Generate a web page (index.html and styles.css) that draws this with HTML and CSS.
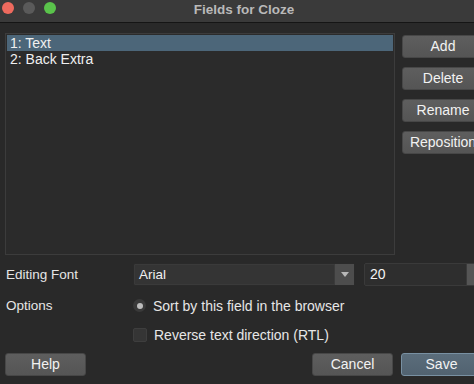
FILE: index.html
```html
<!DOCTYPE html>
<html>
<head>
<meta charset="utf-8">
<link rel="stylesheet" href="styles.css">
</head>
<body>
<div class="window">
  <div class="titlebar">
    <div class="lights">
      <span class="light red"></span>
      <span class="light grey"></span>
      <span class="light green"></span>
    </div>
    <div class="title">Fields for Cloze</div>
  </div>
  <div class="content">
    <div class="top">
      <div class="list">
        <div class="item selected">1: Text</div>
        <div class="item">2: Back Extra</div>
      </div>
      <div class="side">
        <div class="btn side-btn">Add</div>
        <div class="btn side-btn">Delete</div>
        <div class="btn side-btn">Rename</div>
        <div class="btn side-btn">Reposition</div>
      </div>
    </div>
    <div class="form">
      <div class="frow">
        <div class="label">Editing Font</div>
        <div class="fontrow">
          <div class="combo">
            <span class="combo-text">Arial</span>
            <span class="combo-arrow"><svg width="8" height="5" viewBox="0 0 8 5"><path d="M0 0 H8 L4 5 Z" fill="#b8b8b8"/></svg></span>
          </div>
          <div class="spin">
            <span class="spin-text">20</span>
            <span class="spin-btns"></span>
          </div>
        </div>
      </div>
      <div class="frow row-opt">
        <div class="label">Options</div>
        <div class="opt">
          <span class="radio"><span class="dot"></span></span>
          <span>Sort by this field in the browser</span>
        </div>
      </div>
      <div class="frow row-rtl">
        <div class="label"></div>
        <div class="opt">
          <span class="check"></span>
          <span>Reverse text direction (RTL)</span>
        </div>
      </div>
    </div>
    <div class="footer">
      <div class="btn foot-btn">Help</div>
      <div class="spacer"></div>
      <div class="btn foot-btn">Cancel</div>
      <div class="btn foot-btn default">Save</div>
    </div>
  </div>
</div>
</body>
</html>
```

FILE: styles.css
```css
html, body {
  margin: 0;
  padding: 0;
  background: #292929;
  overflow: hidden;
}
body {
  width: 474px;
  height: 384px;
  font-family: "Liberation Sans", Arial, sans-serif;
  font-size: 13px;
  color: #e6e6e6;
}
.window {
  width: 500px;
  height: 384px;
  background: #292929;
}
.titlebar {
  height: 22px;
  background: #3a3a3a;
  border-bottom: 1px solid #151515;
  position: relative;
  display: flex;
  align-items: center;
  justify-content: center;
  width: 474px;
}
.lights {
  position: absolute;
  left: 2px;
  top: 2px;
  display: flex;
  gap: 9px;
}
.light {
  width: 12px;
  height: 12px;
  border-radius: 50%;
  display: block;
}
.red { background: #ee6a5e; }
.grey { background: #5a5a5a; }
.green { background: #5ac34b; }
.title {
  font-weight: bold;
  font-size: 13.5px;
  color: #b9b9b9;
  margin-left: 14px;
  margin-top: -4px;
}
.content {
  padding: 10px 0 0 5px;
}
.top {
  display: flex;
  align-items: flex-start;
}
.list {
  width: 388px;
  height: 219px;
  border: 1px solid #3c3c3c;
  background: #2b2b2b;
  padding: 1px 0 0 0;
}
.item {
  height: 16px;
  line-height: 16px;
  padding-left: 3px;
  font-size: 14px;
  color: #f0f0f0;
  margin: 0 1px;
}
.item.selected {
  background: #4c6679;
}
.side {
  display: flex;
  flex-direction: column;
  gap: 9px;
  margin-left: 7px;
  margin-top: 2px;
}
.btn {
  box-sizing: border-box;
  height: 23px;
  line-height: 21px;
  text-align: center;
  background: linear-gradient(#5e5e5e, #555555);
  border: 1px solid #474747;
  border-radius: 3px;
  color: #f2f2f2;
  font-size: 14px;
}
.side-btn {
  width: 82px;
}
.form {
  display: flex;
  flex-direction: column;
  margin-top: 8px;
}
.frow {
  display: flex;
  height: 23px;
}
.row-opt { margin-top: 8px; }
.row-rtl { margin-top: 6px; }
.label {
  width: 128px;
  flex: none;
  padding-left: 1px;
  box-sizing: border-box;
  line-height: 23px;
  font-size: 13.5px;
}
.fontrow {
  display: flex;
  gap: 9px;
}
.combo {
  box-sizing: border-box;
  width: 222px;
  height: 23px;
  display: flex;
  background: #343434;
  border: 1px solid #2a2a2a;
  border-radius: 2px;
  box-shadow: 0 0 0 1px #3a3a3a inset;
}
.combo-text {
  flex: 1;
  padding-left: 5px;
  line-height: 21px;
  font-size: 13.5px;
  color: #f0f0f0;
}
.combo-arrow {
  width: 19px;
  background: #4d4d4d;
  display: flex;
  align-items: center;
  justify-content: center;
  border-left: 1px solid #3b3b3b;
}
.spin {
  box-sizing: border-box;
  width: 112px;
  height: 23px;
  display: flex;
  background: #2e2e2e;
  border: 1px solid #3a3a3a;
  border-radius: 2px;
}
.spin-text {
  flex: 1;
  padding-left: 5px;
  line-height: 21px;
  font-size: 14px;
  color: #f4f4f4;
}
.spin-btns {
  width: 8px;
  background: #555;
  border-left: 1px solid #3a3a3a;
}
.opt {
  display: flex;
  align-items: center;
  gap: 7px;
  height: 23px;
  font-size: 14px;
}
.radio {
  width: 13px;
  height: 13px;
  border-radius: 50%;
  background: #3a3a3a;
  display: flex;
  align-items: center;
  justify-content: center;
}
.dot {
  width: 6px;
  height: 6px;
  border-radius: 50%;
  background: #bdbdbd;
}
.check {
  box-sizing: border-box;
  width: 14px;
  height: 14px;
  border-radius: 2px;
  background: #353535;
  border: 1px solid #3e3e3e;
}
.footer {
  display: flex;
  gap: 8px;
  margin-top: 7px;
  width: 490px;
}
.spacer {
  width: 210px;
}
.foot-btn {
  width: 81px;
}
.default {
  background: linear-gradient(#5b6d7b, #516270);
  border: 1px solid #7890a2;
}
```
